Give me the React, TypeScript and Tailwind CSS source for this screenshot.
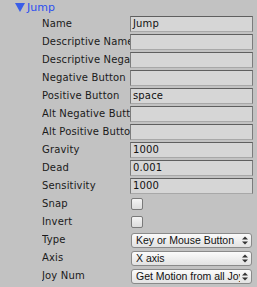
import React from "react";

const font = { fontFamily: '"DejaVu Sans", "Liberation Sans", sans-serif' };

function Label({ children }: { children: React.ReactNode }) {
  return (
    <div className="w-[88px] shrink-0 overflow-hidden whitespace-nowrap text-[10px] leading-[16px] tracking-[0.15px] text-[#1a1a1a]">
      {children}
    </div>
  );
}

function TextField({ value }: { value?: string }) {
  return (
    <div className="h-[16px] w-[123px] border border-[#7c7c7c] border-t-[#5f5f5f] border-b-[#a8a8a8] bg-[#d6d6d6] pl-[2px] text-[10px] leading-[14px] tracking-[0.15px] text-[#111]">
      {value}
    </div>
  );
}

function Checkbox() {
  return (
    <div className="ml-[1px] h-[12px] w-[12px] rounded-[2px] border border-[#7a7a7a] bg-gradient-to-b from-[#f4f4f4] to-[#dcdcdc]" />
  );
}

function Dropdown({ value }: { value: string }) {
  return (
    <div className="ml-[1px] flex h-[15px] w-[121px] items-center justify-between rounded-[3px] border border-[#8a8a8a] bg-gradient-to-b from-[#fbfbfb] to-[#e2e2e2] pl-[4px] pr-[3px] text-[#111]">
      <span
        className="min-w-0 overflow-hidden whitespace-nowrap text-[10.5px] leading-[13px]"
        style={{ fontFamily: '"Liberation Sans", Arial, sans-serif' }}
      >
        {value}
      </span>
      <svg width="6" height="9" viewBox="0 0 6 9" className="ml-[2px] shrink-0">
        <path d="M0 3.5 L3 0.5 L6 3.5 Z" fill="#333" />
        <path d="M0 5.5 L3 8.5 L6 5.5 Z" fill="#333" />
      </svg>
    </div>
  );
}

type Row = { label: string; kind: "text" | "check" | "drop"; value?: string };

const rows: Row[] = [
  { label: "Name", kind: "text", value: "Jump" },
  { label: "Descriptive Name", kind: "text" },
  { label: "Descriptive Negative Name", kind: "text" },
  { label: "Negative Button", kind: "text" },
  { label: "Positive Button", kind: "text", value: "space" },
  { label: "Alt Negative Button", kind: "text" },
  { label: "Alt Positive Button", kind: "text" },
  { label: "Gravity", kind: "text", value: "1000" },
  { label: "Dead", kind: "text", value: "0.001" },
  { label: "Sensitivity", kind: "text", value: "1000" },
  { label: "Snap", kind: "check" },
  { label: "Invert", kind: "check" },
  { label: "Type", kind: "drop", value: "Key or Mouse Button" },
  { label: "Axis", kind: "drop", value: "X axis" },
  { label: "Joy Num", kind: "drop", value: "Get Motion from all Joysticks" },
];

export default function App() {
  return (
    <div className="h-[287px] w-[257px] overflow-hidden bg-[#c2c2c2]" style={font}>
      <div className="flex h-[16px] items-center pl-[15px]">
        <svg width="10" height="9" viewBox="0 0 10 9" className="mb-[2px]">
          <path d="M0 0 L10 0 L5 9 Z" fill="#3a5ee8" />
        </svg>
        <span className="ml-[2px] text-[11px] leading-[14px] text-[#2b4ff0]">Jump</span>
      </div>
      <div className="flex flex-col gap-[2px]">
        {rows.map((r, i) => (
          <div key={i} className="flex h-[16px] items-center pl-[42px]">
            <Label>{r.label}</Label>
            {r.kind === "text" && <TextField value={r.value} />}
            {r.kind === "check" && <Checkbox />}
            {r.kind === "drop" && <Dropdown value={r.value!} />}
          </div>
        ))}
      </div>
    </div>
  );
}
